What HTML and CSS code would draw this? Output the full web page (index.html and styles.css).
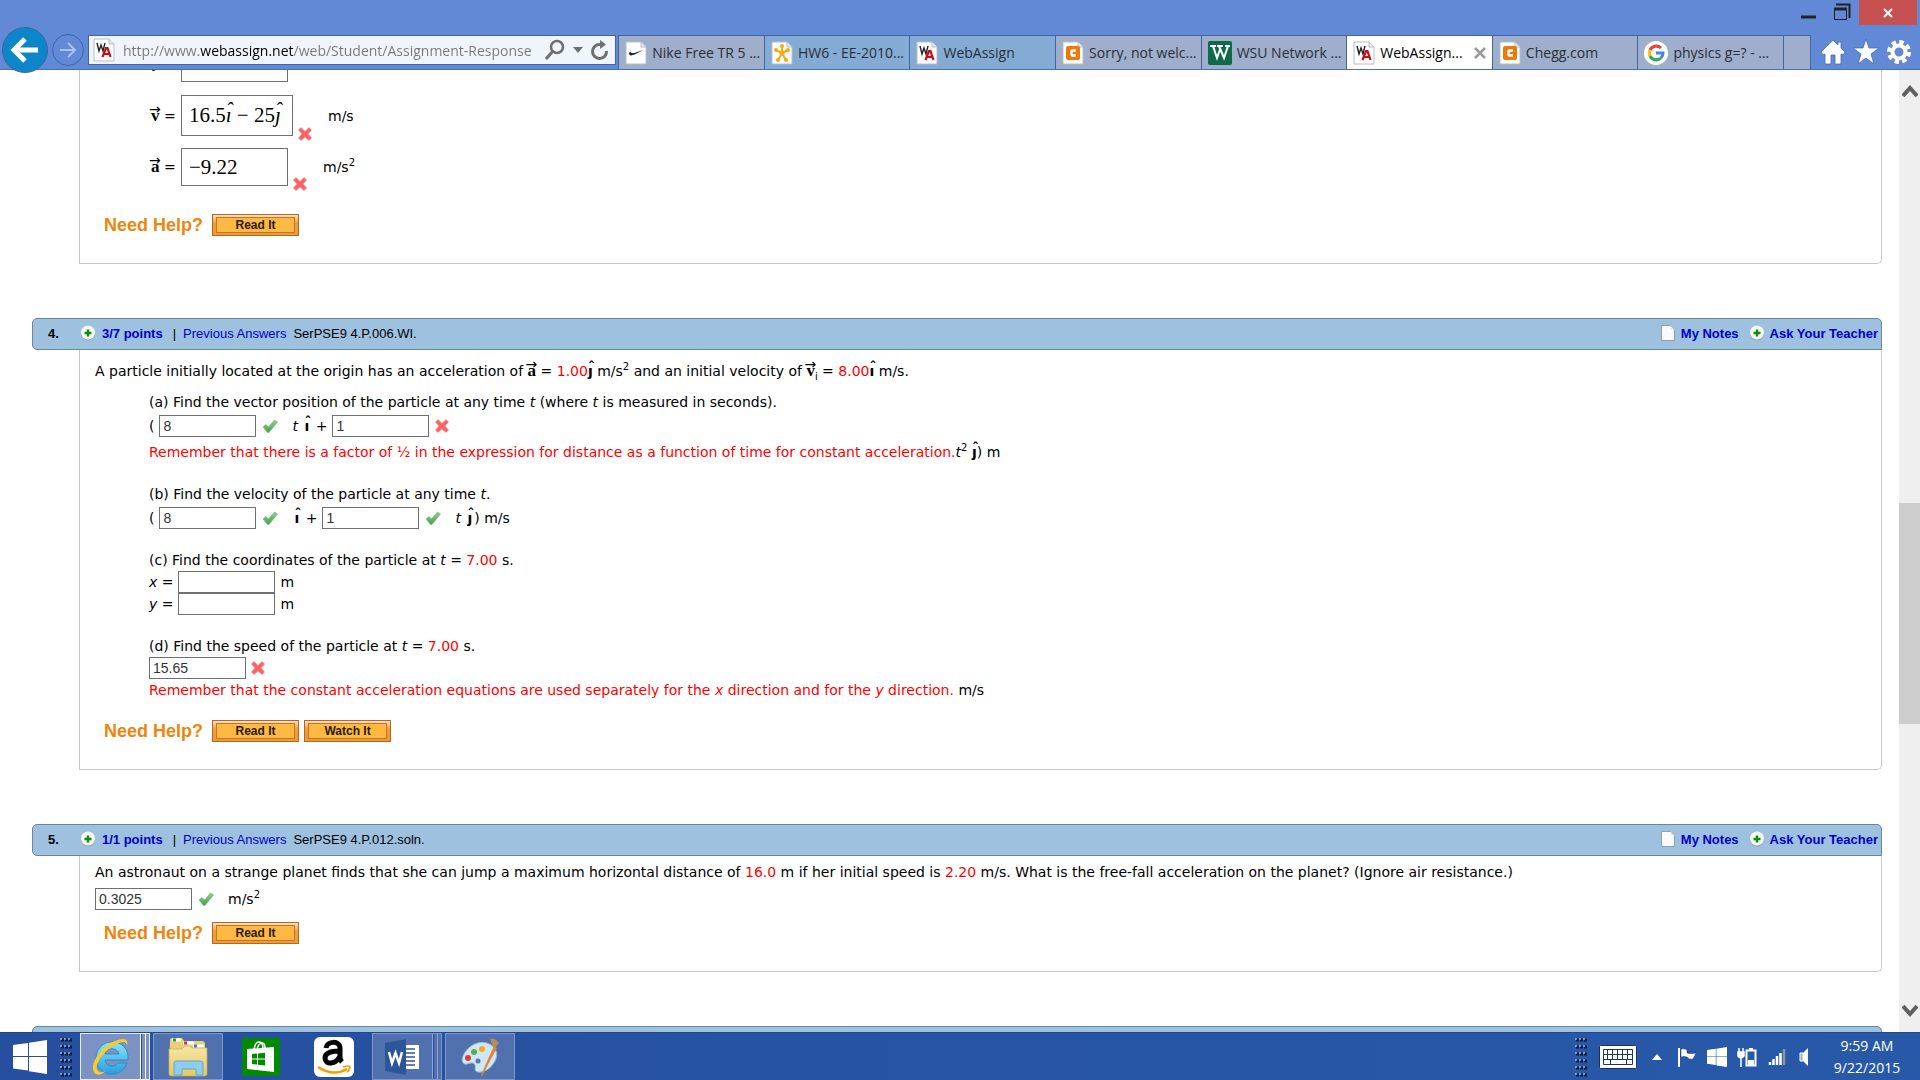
FILE: index.html
```html
<!DOCTYPE html>
<html lang="en">

<head>
  <meta charset="UTF-8">
  <meta name="viewport" content="width=device-width, initial-scale=1.0">
  <title>WebAssign</title>
  <link rel="stylesheet" href="styles.css">
</head>

<body>
  <!-- shared icons -->
  <svg class="defs" width="0" height="0">
    <defs>
      <linearGradient id="green" x1="0" y1="0" x2="0" y2="1"><stop offset="0" stop-color="#8fd08a" /><stop offset="1" stop-color="#4b9f4b" /></linearGradient>
      <linearGradient id="gold" x1="0" y1="0" x2="0" y2="1"><stop offset="0" stop-color="#f7e7a5" /><stop offset="1" stop-color="#e6c963" /></linearGradient>
      <linearGradient id="ie" x1="0" y1="0" x2="0" y2="1"><stop offset="0" stop-color="#8be4fb" /><stop offset="1" stop-color="#2a9fdc" /></linearGradient>
    </defs>
    <symbol id="check" viewBox="0 0 16 14"><path d="M1 8 L4 5.500 L6.500 8 L12.500 1 L15.500 3 L7 13.500 H5.500 Z" fill="url(#green)" stroke="#6bb56b" stroke-width=".6" /></symbol>
    <symbol id="cross" viewBox="0 0 14 14"><path d="M3 .5 L7 4.500 L11 .5 L13.500 3 L10 7 L13.500 11 L11 13.500 L7 10 L3 13.500 L.5 11 L4 7 L.5 3 Z" fill="#fb6363" stroke="#f58080" stroke-width=".6" /></symbol>
    <symbol id="plus" viewBox="0 0 16 16"><circle cx="8" cy="8.500" r="7" fill="#8fa3b3" /><circle cx="8" cy="7.500" r="7" fill="#f6f6f3" /><path d="M6.800 4.500h2.400v2.300h2.300v2.400h-2.300v2.300h-2.400v-2.300h-2.300v-2.400h2.300z" fill="#0a8f0a" /></symbol>
    <symbol id="note" viewBox="0 0 16 18"><path d="M1.500 1.500h9l4 4v11h-13z" fill="#fafafa" stroke="#8aa0b4" /><path d="M10.500 1.500v4h4" fill="#e3e8ee" /></symbol>
    <symbol id="page" viewBox="0 0 22 24"><path d="M1 1h15l5 5v17H1z" fill="#fff" stroke="#b9bcc4" /><path d="M16 1v5h5" fill="#e8e8e8" stroke="#b9bcc4" /></symbol>
    <symbol id="wa" viewBox="0 0 22 24"><use href="#page" /><path d="M4 5l2 8 2-6 2 6 2-8" fill="none" stroke="#222" stroke-width="1.400" /><path d="M9.500 19l3.500-9h1.500l3 9M11 16h5" fill="none" stroke="#d00a12" stroke-width="2.200" /></symbol>
    <symbol id="chegg" viewBox="0 0 22 24"><use href="#page" /><rect x="4" y="5" width="14" height="14" rx="2" fill="#eb7a09" /><path d="M14 9.500h-3.500a1 1 0 0 0-1 1v3a1 1 0 0 0 1 1H14" fill="none" stroke="#fff" stroke-width="2.400" /></symbol>
    <symbol id="win" viewBox="0 0 34 34"><path d="M0 5l15-2v13H0zM16 2.800L34 0v16H16zM0 17h15v13.500L0 28.500zM16 17h18v17l-18-2.700z" fill="#fff" /></symbol>
    <symbol id="grip" viewBox="0 0 12 40"><g stroke="#0c1c3c" stroke-width="3" stroke-dasharray="3 1"><path d="M1 3h11M1 10h11M1 17h11M1 24h11M1 31h11M1 38h11" /></g><g stroke="#9fb4dc" stroke-width="1.500" stroke-dasharray="2 2"><path d="M0 2h11M0 9h11M0 16h11M0 23h11M0 30h11M0 37h11" /></g></symbol>
  </svg>

  <header class="browser">
    <div class="window-controls">
      <button aria-label="Minimize"><svg width="16" height="22"><path d="M0 17h15" stroke="#222" stroke-width="3" /></svg></button>
      <button aria-label="Restore"><svg width="18" height="22"><path d="M3 4.500h13.500V18" fill="none" stroke="#222" stroke-width="2" /><rect x="1.500" y="8.500" width="12" height="11" fill="none" stroke="#222" /><path d="M1 9h13" stroke="#222" stroke-width="3" /></svg></button>
      <button class="close" aria-label="Close"><svg width="10" height="10"><path d="M1 1l8 8M9 1l-8 8" stroke="#fff" stroke-width="2" /></svg></button>
    </div>
    <nav class="toolbar">
      <button class="back" aria-label="Back"><svg width="30" height="30"><path d="M28 15H5M15 4L4 15l11 11" fill="none" stroke="#fff" stroke-width="5" /></svg></button>
      <button class="forward" aria-label="Forward"><svg width="18" height="18"><path d="M1 9h15M9 2l7 7-7 7" fill="none" stroke="#a9c3f2" stroke-width="2" /></svg></button>
      <form class="address">
        <svg width="22" height="24"><use href="#wa" /></svg>
        <input type="text" aria-label="Address" value="http://www.webassign.net/web/Student/Assignment-Response">
        <button type="button" aria-label="Search"><svg width="20" height="22"><circle cx="12" cy="8" r="6" fill="none" stroke="#6f6f6f" stroke-width="2.500" /><path d="M8 12l-7 8" stroke="#6f6f6f" stroke-width="3" /></svg></button>
        <button type="button" aria-label="Show history"><svg width="10" height="6"><path d="M0 0h10L5 6z" fill="#6f6f6f" /></svg></button>
        <button type="button" aria-label="Refresh"><svg width="18" height="20"><path d="M15.500 11A7 7 0 1 1 9 4.500h2" fill="none" stroke="#6f6f6f" stroke-width="3" /><path d="M9 0l6 4.500L9 9z" fill="#6f6f6f" /></svg></button>
      </form>
      <div class="tabs" role="tablist">
        <button class="tab" role="tab"><svg width="22" height="24"><use href="#page" /><path d="M4 12c0 4 4 3 14-3-8 3-12 4.500-12.500 1.500z" fill="#222" /></svg><span>Nike Free TR 5 ...</span></button>
        <button class="tab blue" role="tab"><svg width="22" height="24"><use href="#page" /><g stroke="#f4a913" stroke-width="2"><path d="M11 12V5M11 12l-6-3M11 12l6-3M11 12l-4 7M11 12l4 7" /></g><g fill="#f4a913"><circle cx="11" cy="12" r="2.500" /><circle cx="11" cy="5" r="2" /><circle cx="5" cy="9" r="2" /><circle cx="17" cy="9" r="2" /><circle cx="7" cy="19" r="2" /><circle cx="15" cy="19" r="2" /></g></svg><span>HW6 - EE-2010...</span></button>
        <button class="tab blue" role="tab"><svg width="22" height="24"><use href="#wa" /></svg><span>WebAssign</span></button>
        <button class="tab" role="tab"><svg width="22" height="24"><use href="#chegg" /></svg><span>Sorry, not welc...</span></button>
        <button class="tab" role="tab"><svg width="24" height="24"><rect width="24" height="24" rx="2" fill="#0f6a48" /><path d="M2 5h6M9 5h6M17 5h5M5 5l4 12 3.500-10M11 5l5 12 4-12" fill="none" stroke="#fff" stroke-width="2" /></svg><span>WSU Network ...</span></button>
        <button class="tab active" role="tab" aria-selected="true"><svg width="22" height="24"><use href="#wa" /></svg><span>WebAssign...</span><svg class="tab-close" width="12" height="12"><path d="M1 1l10 10M11 1L1 11" stroke="#9a9a9a" stroke-width="2.500" /></svg></button>
        <button class="tab" role="tab"><svg width="22" height="24"><use href="#chegg" /></svg><span>Chegg.com</span></button>
        <button class="tab" role="tab"><svg width="24" height="24"><circle cx="12" cy="12" r="12" fill="#fff" /><g fill="none" stroke-width="3"><path d="M17 7a7 7 0 0 0-11 2" stroke="#ea4335" /><path d="M6 9a7 7 0 0 0 0 6" stroke="#fbbc05" /><path d="M6 15a7 7 0 0 0 11 2" stroke="#34a853" /><path d="M17 17a7 7 0 0 0 2-5h-7" stroke="#4285f4" /></g></svg><span>physics g=? - ...</span></button>
        <button class="new-tab" aria-label="New tab"></button>
      </div>
      <div class="tools">
        <button aria-label="Home"><svg width="26" height="26" viewBox="0 0 26 26"><path d="M13 1L1 13l2 3 2-1v10h6v-9h4v9h6V15l2 1 2-3-4-4V3h-3v3z" fill="#fff" stroke="#456cae" stroke-width=".8" /></svg></button>
        <button aria-label="Favorites"><svg width="26" height="26" viewBox="0 0 26 26"><path d="M13 0l3 9h10l-8 6 3 10-8-6-8 6 3-10-8-6h10z" fill="#fff" stroke="#456cae" stroke-width=".8" /></svg></button>
        <button aria-label="Tools"><svg width="26" height="26" viewBox="0 0 26 26"><circle cx="13" cy="13" r="10" fill="none" stroke="#fff" stroke-width="4" stroke-dasharray="4.500 3.350" /><circle cx="13" cy="13" r="6.500" fill="none" stroke="#fff" stroke-width="4" /></svg></button>
      </div>
    </nav>
  </header>

  <div class="view">
    <main>
      <article class="question">
        <div class="body scrolled">
          <div class="mathrow">
            <label for="r"><b>r</b></label>
            <input id="r" class="mathpad" type="text">
          </div>
          <div class="mathrow">
            <label id="v-label"><b class="vec">v</b> =</label>
            <div class="mathpad wide" role="textbox" aria-labelledby="v-label">16.5<i class="hat">ı</i> − 25<i class="hat">ȷ</i></div>
            <svg class="mark" width="14" height="14"><use href="#cross" /></svg>
            <span class="units">m/s</span>
          </div>
          <div class="mathrow">
            <label for="a"><b class="vec">a</b> =</label>
            <input id="a" class="mathpad" type="text" value="−9.22">
            <svg class="mark" width="14" height="14"><use href="#cross" /></svg>
            <span class="units">m/s<sup>2</sup></span>
          </div>
          <div class="help"><span>Need Help?</span><button><span>Read It</span></button></div>
        </div>
      </article>

      <article class="question">
        <header class="bar">
          <b class="number">4.</b>
          <svg width="16" height="16"><use href="#plus" /></svg>
          <a class="points" href="#">3/7 points</a>
          <span class="sep">|</span>
          <a href="#">Previous Answers</a>
          <span class="code">SerPSE9 4.P.006.WI.</span>
          <div class="links">
            <svg width="16" height="18"><use href="#note" /></svg>
            <a href="#">My Notes</a>
            <svg width="16" height="16"><use href="#plus" /></svg>
            <a href="#">Ask Your Teacher</a>
          </div>
        </header>
        <div class="body">
          <p>A particle initially located at the origin has an acceleration of <b class="vec">a</b>&nbsp;= <em>1.00</em><b class="hat">ȷ</b> m/s<sup>2</sup> and an initial velocity of <b class="vec">v</b><sub>i</sub> = <em>8.00</em><b class="hat">ı</b> m/s.</p>
          <section class="part">
            <p>(a) Find the vector position of the particle at any time <i>t</i> (where <i>t</i> is measured in seconds).</p>
            <div class="answer">
              <span>(</span><input type="text" aria-label="i component" value="8"><svg width="16" height="14"><use href="#check" /></svg>
              <span class="after"><i>t</i> <b class="hat">ı</b> +</span><input type="text" aria-label="j component" value="1"><svg width="14" height="14"><use href="#cross" /></svg>
            </div>
            <p class="feedback"><em>Remember that there is a factor of ½ in the expression for distance as a function of time for constant acceleration.</em><i>t</i><sup>2</sup> <b class="hat">ȷ</b>) m</p>
          </section>
          <section class="part">
            <p>(b) Find the velocity of the particle at any time <i>t</i>.</p>
            <div class="answer">
              <span>(</span><input type="text" aria-label="i component" value="8"><svg width="16" height="14"><use href="#check" /></svg>
              <span class="after"><b class="hat">ı</b> +</span><input type="text" aria-label="j component" value="1"><svg width="16" height="14"><use href="#check" /></svg>
              <span class="after"><i>t</i> <b class="hat">ȷ</b>) m/s</span>
            </div>
          </section>
          <section class="part">
            <p>(c) Find the coordinates of the particle at <i>t</i> = <em>7.00</em> s.</p>
            <div class="coord"><label for="x"><i>x</i> =</label><input id="x" type="text"><span>m</span></div>
            <div class="coord"><label for="y"><i>y</i> =</label><input id="y" type="text"><span>m</span></div>
          </section>
          <section class="part">
            <p>(d) Find the speed of the particle at <i>t</i> = <em>7.00</em> s.</p>
            <div class="coord"><input type="text" aria-label="Speed" value="15.65"><svg width="14" height="14"><use href="#cross" /></svg></div>
            <p><em>Remember that the constant acceleration equations are used separately for the <i>x</i> direction and for the <i>y</i> direction.</em> m/s</p>
          </section>
          <div class="help"><span>Need Help?</span><button><span>Read It</span></button><button><span>Watch It</span></button></div>
        </div>
      </article>

      <article class="question">
        <header class="bar">
          <b class="number">5.</b>
          <svg width="16" height="16"><use href="#plus" /></svg>
          <a class="points" href="#">1/1 points</a>
          <span class="sep">|</span>
          <a href="#">Previous Answers</a>
          <span class="code">SerPSE9 4.P.012.soln.</span>
          <div class="links">
            <svg width="16" height="18"><use href="#note" /></svg>
            <a href="#">My Notes</a>
            <svg width="16" height="16"><use href="#plus" /></svg>
            <a href="#">Ask Your Teacher</a>
          </div>
        </header>
        <div class="body short">
          <p>An astronaut on a strange planet finds that she can jump a maximum horizontal distance of <em>16.0</em> m if her initial speed is <em>2.20</em> m/s. What is the free-fall acceleration on the planet? (Ignore air resistance.)</p>
          <div class="answer">
            <input type="text" aria-label="Acceleration" value="0.3025"><svg width="16" height="14"><use href="#check" /></svg><span class="after">m/s<sup>2</sup></span>
          </div>
          <div class="help"><span>Need Help?</span><button><span>Read It</span></button></div>
        </div>
      </article>

      <article class="question">
        <header class="bar"></header>
      </article>
    </main>
    <div class="scrollbar">
      <svg width="16" height="14"><path d="M1 12l7-8 7 8" fill="none" stroke="#606060" stroke-width="4" /></svg>
      <div class="track"><div class="thumb"></div></div>
      <svg width="16" height="14"><path d="M1 2l7 8 7-8" fill="none" stroke="#606060" stroke-width="4" /></svg>
    </div>
  </div>

  <footer class="taskbar">
    <button class="start" aria-label="Start"><svg width="34" height="34"><use href="#win" /></svg></button>
    <svg width="12" height="40"><use href="#grip" /></svg>
    <div class="apps">
      <button class="app open stack current" aria-label="Internet Explorer"><svg width="40" height="40" viewBox="0 0 40 40"><path d="M37 23H14c1 7 9 8 13 3h9c-3 8-9 11-15 11C11 37 5 30 5 21 5 12 12 5 21 5c10 0 17 7 16 18zM14 17h14c-1-7-13-7-14 0z" fill="url(#ie)" stroke="#1f86c4" stroke-width=".8" /><path d="M5 37C-4 32 8 10 24 4c9-4 14-2 12 5 0-5-5-5-12-1C12 14 2 29 7 34c2 2 5 1 8 0-4 3-7 5-10 3z" fill="#f8cc2c" /></svg></button>
      <button class="app open" aria-label="File Explorer"><svg width="42" height="40" viewBox="0 0 42 40"><path d="M3 3q0-2 2-2h10l2 3h18q3 0 3 3v30H2z" fill="#e9d078" /><path d="M5 3h9M16 6h11M26 9h11" stroke="#fff" stroke-width="3" /><path d="M6 3h3" stroke="#2d9a3d" stroke-width="3" /><path d="M17 6h3" stroke="#d33" stroke-width="3" /><path d="M27 9h3" stroke="#2a7fd0" stroke-width="3" /><path d="M2 12h13l3-3h5l2 2h15v26q0 2-3 2H5q-3 0-3-2z" fill="url(#gold)" stroke="#cfae4a" stroke-width=".7" /><path d="M7 38V26q0-2 2-2h24q3 0 3 2v12h-7v-6H15v6z" fill="#8fcdec" stroke="#5ba6d2" /></svg></button>
      <button class="app" aria-label="Store"><svg width="38" height="38" viewBox="0 0 38 38"><rect width="38" height="38" fill="#008a00" /><path d="M5 11l27-2v25L5 31z" fill="#fff" /><path d="M12 12q1-8 5-8t4 7M15 11q2-6 5-6 3 0 3 5" fill="none" stroke="#fff" stroke-width="1.500" /><path d="M10 16l5-.5v5h-5zM16 15.400l7-.6v5.700h-7zM10 21.500h5v5l-5-.5zM16 21.500h7v6l-7-.7z" fill="#008a00" /></svg></button>
      <button class="app" aria-label="Amazon"><svg width="40" height="40" viewBox="0 0 40 40"><rect width="40" height="40" rx="6" fill="#fff" /><path d="M12 11C13 4 26 3 26 11V20q0 3 2 5M26 14C16 14 11 16 11 21c0 7 11 7 15-2" fill="none" stroke="#000" stroke-width="5" /><path d="M4 30q15 10 29 2" fill="none" stroke="#f90" stroke-width="2.500" /><path d="M29 30q6-2 7 0-1 4-3 5" fill="none" stroke="#f90" stroke-width="1.500" /></svg></button>
      <button class="app open stack" aria-label="Word"><svg width="36" height="38" viewBox="0 0 36 38"><path d="M20 7h14v24H20z" fill="#fff" /><path d="M20 11h10M20 15h10M20 19h10M20 23h10M20 27h10" stroke="#2b579a" stroke-width="1.500" /><path d="M0 5l21-4v36L0 33z" fill="#2b579a" /><path d="M4 14l3 11 3.500-10L14 25l3-11" fill="none" stroke="#fff" stroke-width="2.500" /></svg></button>
      <button class="app open" aria-label="Paint"><svg width="42" height="40" viewBox="0 0 42 40"><path d="M3 23C5 11 18 3 28 6c9 3 12 11 8 18-4 8-12 12-17 11-6-1 0-7-5-9-5-1-9 5-11-3z" fill="#cfe6f5" stroke="#8db9d6" /><circle cx="9" cy="21" r="3" fill="#e03a2c" /><circle cx="15" cy="15" r="3" fill="#58ad4a" /><circle cx="23" cy="12" r="3" fill="#f6a91a" /><circle cx="19" cy="24" r="2.500" fill="#5577b3" /><path d="M22 38l8-18 5-11 3 2-6 11-9 17z" fill="#e08432" /><path d="M31 2q4-2 9 4l-5 6z" fill="#b98a60" /></svg></button>
    </div>
    <div class="tray">
      <svg width="12" height="40"><use href="#grip" /></svg>
      <button class="keyboard" aria-label="Touch keyboard"><svg width="38" height="24"><rect x=".5" y=".5" width="37" height="23" rx="1" fill="#fff" stroke="#1b3263" /><path d="M4.500 4.500h29v15h-29zM4 9.500h30M4 14.500h30M8.500 4v11M13.500 4v11M18.500 4v11M23.500 4v11M28.500 4v11M11.500 15v5M27.500 15v5" fill="none" stroke="#1b3263" /></svg></button>
      <button class="arrow" aria-label="Show hidden icons"><svg width="10" height="6"><path d="M0 6l5-6 5 6z" fill="#fff" /></svg></button>
      <button aria-label="Action Center"><svg width="20" height="20"><path d="M2 1v19" stroke="#fff" stroke-width="2" /><path d="M4 2q4-1 6 1v3q3 1 9 0l-3 6q-4 1-6-2-3-1-6 0z" fill="#fff" stroke="#1b3263" stroke-width=".5" /></svg></button>
      <button aria-label="Get Windows 10"><svg width="20" height="20"><use href="#win" /></svg></button>
      <button aria-label="Battery"><svg width="20" height="20"><path d="M2 1v4M6 1v4M1 5h6v4q-1 2-3 2-2 0-3-2zM4 10v10" fill="#fff" stroke="#fff" stroke-width="1.500" /><path d="M9.500 3.500h9v15h-9z" fill="none" stroke="#fff" stroke-width="2" /><path d="M12 1h4v2h-4zM11 13h6v5h-6z" fill="#fff" /></svg></button>
      <button aria-label="Network"><svg width="20" height="20"><path d="M3 15v3M6.500 12v6M10 9v9M13.500 6v12" stroke="#fff" stroke-width="2.500" /><path d="M17 2v16" stroke="#8e949c" stroke-width="2.500" /></svg></button>
      <button aria-label="Volume"><svg width="14" height="20"><path d="M3 6h3v8H3z" fill="#a9a9a9" stroke="#fff" /><path d="M6 6l5-5v18l-5-5z" fill="#fff" /></svg></button>
      <div class="clock"><span>9:59 AM</span><span>9/22/2015</span></div>
    </div>
  </footer>
</body>

</html>
```
FILE: styles.css
```css
* {
  box-sizing: border-box;
}

body {
  margin: 0;
  height: 100vh;
  display: flex;
  flex-direction: column;
  overflow: hidden;
  background: #fff;
  font-family: "DejaVu Sans", sans-serif;
  font-size: 14px;
  color: #000;
}

button {
  border: 0;
  padding: 0;
  background: none;
  display: flex;
  align-items: center;
  justify-content: center;
}

svg {
  flex: none;
}

.defs {
  position: absolute;
}

/* browser chrome */
.browser {
  flex: none;
  background: #6189d5;
  border-bottom: 1px solid #4a70b5;
  font-family: "Open Sans", sans-serif;
}

.window-controls {
  height: 35px;
  padding-right: 3px;
  display: flex;
  align-items: flex-start;
  justify-content: flex-end;
  gap: 16px;
}

.window-controls .close {
  width: 58px;
  height: 25px;
  margin-left: -8px;
  background: #c75050;
}

.toolbar {
  display: flex;
  align-items: stretch;
  height: 34px;
}

.back {
  width: 46px;
  height: 46px;
  margin: -8px 4px 0 2px;
  flex: none;
  border: 1px solid #3f64a5;
  border-radius: 50%;
  background: #0c86c8;
}

.forward {
  width: 32px;
  height: 32px;
  margin: -1px 4px 0 0;
  flex: none;
  border: 1px solid #4066a8;
  border-radius: 50%;
}

.address {
  flex: 516 1 0;
  min-width: 0;
  height: 30px;
  margin-right: 2px;
  padding: 0 6px 0 4px;
  display: flex;
  align-items: center;
  gap: 8px;
  background: #f0f4fb;
  border: 1px solid #42659f;
}

.address input {
  flex: 1;
  min-width: 0;
  border: 0;
  padding: 0;
  font: 14px "Open Sans", sans-serif;
  /* only the domain is dark */
  color: transparent;
  background: linear-gradient(90deg, #777 76px, #000 76px, #000 170px, #777 170px);
  -webkit-background-clip: text;
  background-clip: text;
}

.tabs {
  flex: 1191 1 0;
  min-width: 0;
  display: flex;
  border-left: 1px solid #42659f;
}

.tab,
.new-tab {
  border-top: 1px solid #42659f;
  border-right: 1px solid #42659f;
  background: #9eaecb;
}

.tab {
  flex: 1 1 0;
  min-width: 0;
  padding-left: 6px;
  justify-content: flex-start;
  gap: 5px;
  font: 14px "Open Sans", sans-serif;
  color: #2a2f3a;
}

.tab span {
  overflow: hidden;
  white-space: nowrap;
}

.tab.blue {
  background: #84abd3;
}

.tab.active {
  background: #fff;
  color: #000;
}

.tab-close {
  margin-left: auto;
  margin-right: 6px;
}

.new-tab {
  width: 27px;
  flex: none;
}

.tools {
  flex: none;
  display: flex;
  gap: 7px;
  padding: 0 8px 0 9px;
}

/* page */
.view {
  flex: 1;
  min-height: 0;
  display: flex;
}

main {
  flex: 1;
  min-width: 0;
  overflow: hidden;
  padding: 0 17px 0 32px;
}

.question {
  margin-bottom: 54px;
}

.bar {
  height: 32px;
  padding: 0 3px 2px 15px;
  display: flex;
  align-items: center;
  background: #9dc1df;
  border: 1px solid #6a8799;
  border-radius: 5px 5px 0 5px;
  font-family: "Liberation Sans", sans-serif;
  font-size: 13px;
}

.bar a {
  color: #0000c8;
  text-decoration: none;
}

.number {
  width: 32px;
}

.points {
  margin-left: 6px;
  font-weight: bold;
}

.sep {
  margin: 0 7px 0 10px;
}

.code {
  margin-left: 7px;
}

.links {
  margin-left: auto;
  display: flex;
  align-items: center;
  gap: 5px;
  font-weight: bold;
}

.links a + svg {
  margin-left: 5px;
}

.body {
  margin-left: 47px;
  padding: 10px 15px 27px;
  border: 1px solid #c8c8c8;
  border-top: 0;
  border-radius: 0 0 5px 0;
}

.body.short {
  padding-top: 5px;
}

.body.scrolled {
  padding-top: 0;
}

.body p {
  margin: 0;
  line-height: 22px;
}

.body em {
  font-style: normal;
  color: #f00;
}

.body sup,
.body sub {
  font-size: 10px;
  line-height: 0;
}

.body input {
  width: 97px;
  height: 22px;
  padding: 0 3px;
  border: 1px solid #707070;
  font: 14px "Liberation Sans", sans-serif;
  color: #333;
}

.part {
  margin: 0 0 20px 54px;
}

.body > p + .part {
  margin-top: 9px;
}

.answer,
.coord {
  display: flex;
  align-items: center;
  gap: 5px;
}

.answer {
  margin-top: 2px;
}

.answer input + svg {
  margin-left: 1px;
}

.answer .after {
  margin-left: 9px;
}

.answer .hat {
  margin: 0 2px;
}

.short .answer {
  margin-top: 5px;
}

.part .feedback {
  margin-top: 4px;
}

/* unit vectors and arrows */
.hat,
.vec {
  position: relative;
}

.hat::before,
.vec::before {
  position: absolute;
  left: 0;
  right: 0;
  text-align: center;
  font-weight: bold;
  line-height: 1;
}

.hat::before {
  content: "ˆ";
  top: -3px;
}

.vec {
  font-family: "Liberation Serif", serif;
  font-size: 17px;
  line-height: 0;
}

.vec::before {
  content: "→";
  top: -4px;
  left: -2px;
  font-family: "DejaVu Sans", sans-serif;
  font-size: 14px;
  font-weight: normal;
}

.mathrow {
  display: flex;
  align-items: center;
  gap: 5px;
  margin: 0 0 12px 56px;
}

.mathrow label {
  width: 25px;
  white-space: nowrap;
}

.mathrow:first-child {
  margin-top: -26px;
  margin-bottom: 13px;
}

.mathrow:first-child label {
  padding-top: 6px;
}

.body .mathpad {
  width: 107px;
  height: 38px;
  padding: 0 7px;
  border: 1px solid #707070;
  font: 21px/36px "Liberation Serif", serif;
  color: #000;
}

.body .mathpad.wide {
  width: 112px;
  height: 41px;
  line-height: 38px;
  white-space: nowrap;
}

.mathpad .hat::before {
  font-weight: normal;
}

.mark {
  align-self: flex-end;
  margin-bottom: -5px;
}

.units {
  margin-left: 11px;
}

.help {
  margin: -1px 0 0 9px;
  display: flex;
  align-items: center;
  gap: 5px;
  font-family: "Liberation Sans", sans-serif;
}

.help > span {
  margin-right: 4px;
  font-size: 18px;
  font-weight: bold;
  color: #ee860e;
}

.help button {
  width: 87px;
  height: 22px;
  padding: 2px 3px;
  border: 1px solid #ad6a25;
  background: linear-gradient(#fde0bd, #f79a35 40%, #f9952c);
}

.help button span {
  flex: 1;
  height: 16px;
  border: 1px solid #b87a2e;
  background: #fdb943;
  font: bold 12px/14px "Liberation Sans", sans-serif;
  color: #2a1b05;
}

.mathrow + .help {
  margin-top: 28px;
}

.answer + .help {
  margin-top: 12px;
}

.scrollbar {
  width: 21px;
  flex: none;
  padding: 14px 0;
  display: flex;
  flex-direction: column;
  align-items: center;
  background: #efefef;
}

.track {
  flex: 1;
  width: 100%;
  padding-top: 405px;
}

.thumb {
  height: 221px;
  background: #cdcdcd;
}

/* taskbar */
.taskbar {
  flex: none;
  height: 48px;
  padding: 0 15px 0 13px;
  display: flex;
  align-items: center;
  background: linear-gradient(90deg, #264f9f, #2859a9);
  border-top: 1px solid #24468c;
  font-family: "Open Sans", sans-serif;
}

.start {
  margin-right: 13px;
}

.apps {
  display: flex;
  gap: 3px;
  margin-left: 8px;
  height: 47px;
}

.app {
  width: 70px;
  border: 1px solid transparent;
}

.app.open {
  background: #5170ae;
  border-color: #7f97c8;
}

.app.stack {
  padding-right: 8px;
  background: linear-gradient(90deg, transparent 59px, #8ea3cf 59px, #8ea3cf 60px, #2e4f92 60px, #2e4f92 61px, transparent 61px, transparent 64px, #8ea3cf 64px, #8ea3cf 65px, transparent 65px), #5170ae;
}

.app.current {
  background: linear-gradient(90deg, transparent 59px, #fff 59px, #fff 60px, #2e4f92 60px, #2e4f92 61px, transparent 61px, transparent 64px, #fff 64px, #fff 65px, transparent 65px), #7b92c2;
  border-color: #e8edf7;
}

.tray {
  margin-left: auto;
  display: flex;
  align-items: center;
  gap: 10px;
}

.keyboard {
  margin-left: 2px;
}

.arrow {
  margin: 0 5px;
}

.clock {
  width: 92px;
  margin-right: -8px;
  display: flex;
  flex-direction: column;
  align-items: center;
  font-size: 14px;
  line-height: 22px;
  color: #fff;
}
```
